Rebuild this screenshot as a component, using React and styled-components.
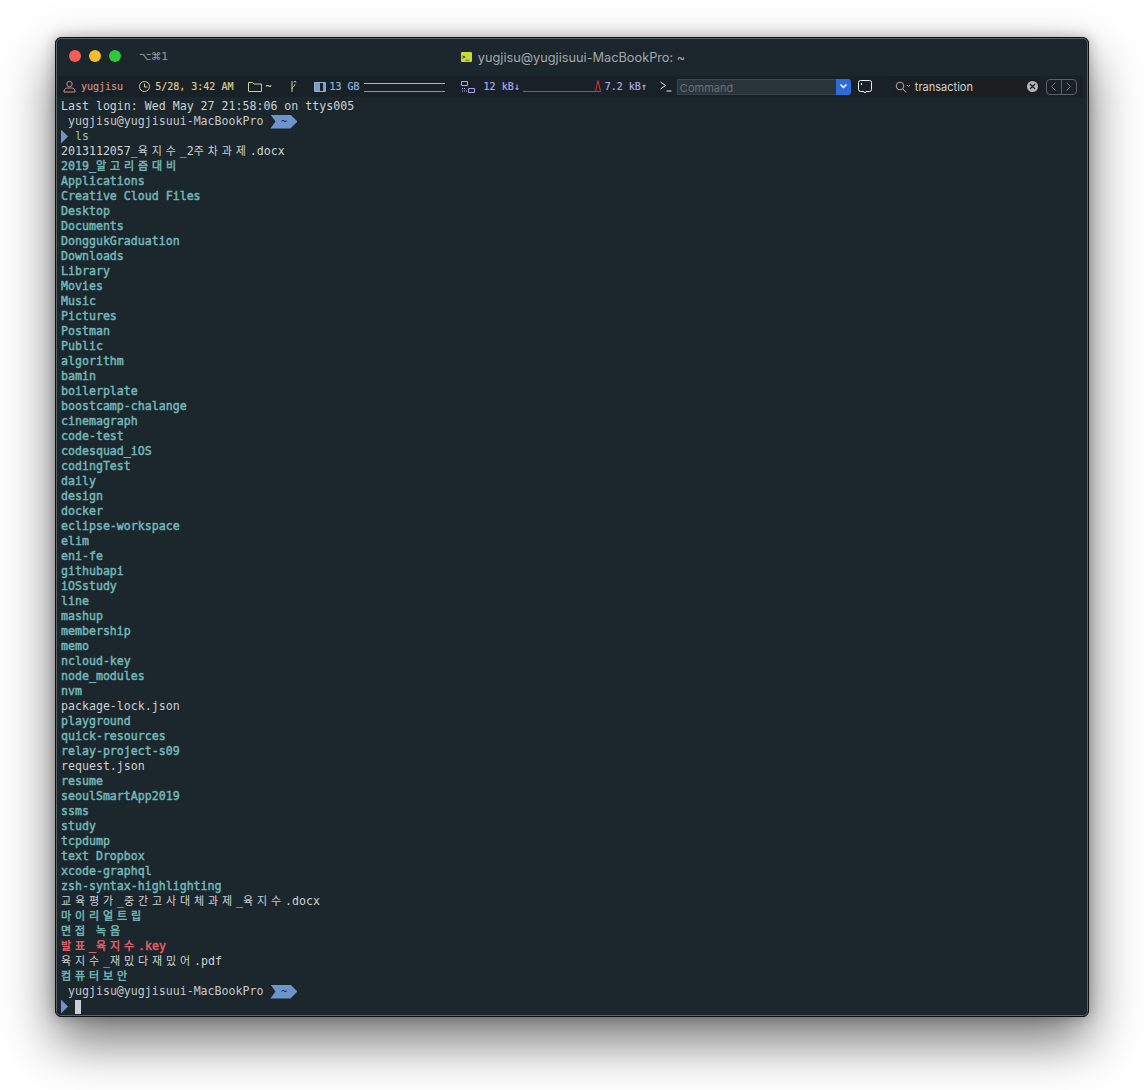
import React from 'react';
import styled, { createGlobalStyle } from 'styled-components';

const GlobalStyle = createGlobalStyle`
  html, body {
    margin: 0;
    padding: 0;
    background: #ffffff;
  }
`;

const MONO = '"DejaVu Sans Mono", "Noto Sans CJK KR", monospace';

const Page = styled.div`
  width: 1144px;
  height: 1090px;
  padding: 37px 55px 0;
  box-sizing: border-box;
  overflow: hidden;
`;

const Window = styled.div`
  width: 1034px;
  height: 980px;
  box-sizing: border-box;
  display: flex;
  flex-direction: column;
  background: #1b262d;
  border-radius: 6px;
  border: 1px solid #0c0f11;
  box-shadow: inset 0 0 0 1px #5c6468, 0 24px 52px rgba(0, 0, 0, 0.55), 0 0 14px rgba(0, 0, 0, 0.28);
  overflow: hidden;
`;

const TitleBar = styled.div`
  height: 38px;
  flex: none;
  position: relative;
  display: flex;
  align-items: center;
  justify-content: center;
  font: 12.75px Inter, "Liberation Sans", sans-serif;
  color: #a4a8aa;
`;

const Lights = styled.div`
  position: absolute;
  left: 13px;
  top: 12px;
  display: flex;
  align-items: center;
  gap: 8px;
`;

const Light = styled.span`
  width: 12px;
  height: 12px;
  border-radius: 50%;
  background: ${(p) => p.$color};
`;

const TabKey = styled.span`
  margin-left: 10px;
  font: 10.5px "DejaVu Sans", sans-serif;
  color: #8b9295;
  -webkit-text-stroke: 0.2px #8b9295;
`;

const WindowTitle = styled.div`
  display: flex;
  align-items: center;
  gap: 6px;
  margin-left: 2px;
`;

const TerminalBadge = styled.span`
  width: 11px;
  height: 10px;
  border-radius: 1px;
  background: #c5d93a;
  color: #1b262d;
  font: bold 6px/10px ${MONO};
  padding-left: 1px;
  box-sizing: border-box;
`;

const StatusBar = styled.div`
  height: 21px;
  flex: none;
  display: flex;
  align-items: center;
  margin: 0 5px 0 1px;
  background: #172127;
  font: 10px ${MONO};
  -webkit-text-stroke: 0.2px;
`;

const Item = styled.div`
  display: flex;
  align-items: center;
  gap: ${(p) => p.$gap ?? 3}px;
  margin-left: ${(p) => p.$left}px;
  color: ${(p) => p.$color};
  white-space: pre;
`;

const CommandBox = styled.div`
  margin-left: 5px;
  width: 174px;
  height: 16px;
  display: flex;
  background: #2a343b;
  border-radius: 1px 3px 3px 1px;
  font: 11px Inter, "Liberation Sans", sans-serif;
  color: #6a7277;
  -webkit-text-stroke: 0;
`;

const CommandText = styled.span`
  flex: 1;
  padding: 2px 0 0 2px;
  border: 1px solid #3a444a;
  border-right: 0;
  line-height: 13px;
`;

const CommandArrow = styled.span`
  width: 15px;
  background: #2f6bd8;
  border-radius: 0 3px 3px 0;
  display: flex;
  align-items: center;
  justify-content: center;
`;

const SearchBox = styled.div`
  margin-left: 19px;
  width: 149px;
  height: 16px;
  display: flex;
  align-items: center;
  background: #1c1f21;
  font: 11px Inter, "Liberation Sans", sans-serif;
  color: #cfd2d3;
  -webkit-text-stroke: 0;
  box-sizing: border-box;
  padding: 0 2px 0 4px;
`;

const SearchText = styled.span`
  flex: 1;
  margin-left: 4px;
`;

const ClearButton = styled.span`
  width: 11px;
  height: 11px;
  border-radius: 50%;
  background: #b4b7b8;
  display: flex;
  align-items: center;
  justify-content: center;
`;

const NavButtons = styled.div`
  margin-left: 6px;
  width: 31px;
  height: 16px;
  box-sizing: border-box;
  display: flex;
  border: 1px solid #596369;
  border-radius: 4px;
`;

const NavButton = styled.span`
  flex: 1;
  display: flex;
  align-items: center;
  justify-content: center;
  & + & {
    border-left: 1px solid #596369;
  }
`;

const Terminal = styled.div`
  flex: 1;
  padding: 2px 0 0 5px;
  font: 11.6px/15px ${MONO};
  color: #cdd2d3;
  white-space: pre;
`;

// the reference's bold is lighter than DejaVu Bold, so thicken the regular face instead
const Row = styled.div`
  height: 15px;
  display: flex;
  align-items: center;
  color: ${(p) => (p.$kind === 'dir' ? '#72b8b9' : p.$kind === 'exec' ? '#e65f68' : '#cdd2d3')};
  -webkit-text-stroke: ${(p) => (p.$kind === 'dir' || p.$kind === 'exec' ? '0.45px' : '0')};
`;

const Wide = styled.span`
  display: inline-block;
  width: 14px;
  font-size: 11px;
`;

const PromptUser = styled.span`
  margin-left: 7px;
  color: #c3c8ca;
`;

const PromptTag = styled.span`
  margin-left: 7px;
  width: 27px;
  height: 14px;
  background: #6c96cb;
  clip-path: polygon(0 0, 20px 0, 100% 50%, 20px 100%, 0 100%, 5px 50%);
  color: #1b262d;
  font-size: 10px;
  line-height: 13px;
  text-align: center;
`;

const PromptArrow = styled.span`
  width: 7px;
  height: 14px;
  background: #6c96cb;
  clip-path: polygon(0 0, 100% 50%, 0 100%);
`;

const Command = styled.span`
  margin-left: 7px;
  color: #93c79a;
`;

const Cursor = styled.span`
  margin-left: 7px;
  width: 6px;
  height: 14px;
  background: #c9d0d3;
`;

const entries = [
  ['2013112057_육지수_2주차과제.docx', 'file'],
  ['2019_알고리즘대비', 'dir'],
  ['Applications', 'dir'],
  ['Creative Cloud Files', 'dir'],
  ['Desktop', 'dir'],
  ['Documents', 'dir'],
  ['DonggukGraduation', 'dir'],
  ['Downloads', 'dir'],
  ['Library', 'dir'],
  ['Movies', 'dir'],
  ['Music', 'dir'],
  ['Pictures', 'dir'],
  ['Postman', 'dir'],
  ['Public', 'dir'],
  ['algorithm', 'dir'],
  ['bamin', 'dir'],
  ['boilerplate', 'dir'],
  ['boostcamp-chalange', 'dir'],
  ['cinemagraph', 'dir'],
  ['code-test', 'dir'],
  ['codesquad_iOS', 'dir'],
  ['codingTest', 'dir'],
  ['daily', 'dir'],
  ['design', 'dir'],
  ['docker', 'dir'],
  ['eclipse-workspace', 'dir'],
  ['elim', 'dir'],
  ['eni-fe', 'dir'],
  ['githubapi', 'dir'],
  ['iOSstudy', 'dir'],
  ['line', 'dir'],
  ['mashup', 'dir'],
  ['membership', 'dir'],
  ['memo', 'dir'],
  ['ncloud-key', 'dir'],
  ['node_modules', 'dir'],
  ['nvm', 'dir'],
  ['package-lock.json', 'file'],
  ['playground', 'dir'],
  ['quick-resources', 'dir'],
  ['relay-project-s09', 'dir'],
  ['request.json', 'file'],
  ['resume', 'dir'],
  ['seoulSmartApp2019', 'dir'],
  ['ssms', 'dir'],
  ['study', 'dir'],
  ['tcpdump', 'dir'],
  ['text Dropbox', 'dir'],
  ['xcode-graphql', 'dir'],
  ['zsh-syntax-highlighting', 'dir'],
  ['교육평가_중간고사대체과제_육지수.docx', 'file'],
  ['마이리얼트립', 'dir'],
  ['면접 녹음', 'dir'],
  ['발표_육지수.key', 'exec'],
  ['육지수_재밌다재밌어.pdf', 'file'],
  ['컴퓨터보안', 'dir'],
];

// hangul takes two terminal cells, so each syllable gets its own fixed-width box
const CellText = ({ text }) => (
  <span>
    {text.split(/([\uAC00-\uD7A3])/).map((part, i) =>
      /[\uAC00-\uD7A3]/.test(part) ? <Wide key={i}>{part}</Wide> : part
    )}
  </span>
);

const Prompt = () => (
  <Row>
    <PromptUser>yugjisu@yugjisuui-MacBookPro</PromptUser>
    <PromptTag>~</PromptTag>
  </Row>
);

const Icon = ({ w = 13, h = 13, children, color = 'currentColor' }) => (
  <svg width={w} height={h} viewBox={`0 0 ${w} ${h}`} fill="none" stroke={color} strokeWidth="1">
    {children}
  </svg>
);

const Spark = ({ width, flat, spike }) => (
  <svg width={width} height="14" viewBox={`0 0 ${width} 14`} fill="none">
    {flat.map((y, i) => (
      <line key={i} x1="0" x2={width} y1={y.y} y2={y.y} stroke={y.color} strokeWidth="1" />
    ))}
    {spike && <path d={spike} stroke="#d8372f" strokeWidth="1" />}
  </svg>
);

export default function App() {
  return (
    <Page>
      <GlobalStyle />
      <Window>
        <TitleBar>
          <Lights>
            <Light $color="#f05f57" />
            <Light $color="#f8bb2e" />
            <Light $color="#2fc740" />
            <TabKey>⌥⌘1</TabKey>
          </Lights>
          <WindowTitle>
            <TerminalBadge>&gt;_</TerminalBadge>
            yugjisu@yugjisuui-MacBookPro: ~
          </WindowTitle>
        </TitleBar>
        <StatusBar>
          <Item $left={6} $color="#d08f88" $gap={5}>
            <Icon>
              <circle cx="6.5" cy="4" r="2.7" />
              <path d="M1 12v-1c0-2 2-3 3.500-3h4c1.500 0 3.500 1 3.500 3v1z" />
            </Icon>
            yugjisu
          </Item>
          <Item $left={15} $color="#dcc98e" $gap={4}>
            <Icon>
              <circle cx="6.500" cy="6.500" r="5" />
              <path d="M6.500 3.500v3.500h3" />
            </Icon>
            5/28, 3:42 AM
          </Item>
          <Item $left={15} $color="#c3d48f" $gap={3}>
            <Icon w={14} h={12}>
              <path d="M.5 10.500v-9h4l1.500 1.500h7.500v7.500z" />
            </Icon>
            ~
          </Item>
          <Item $left={18} $color="#c3d48f">
            <Icon w={9} h={13}>
              <path d="M3 1v11M3 9c0-3 3-2 3-5M5 2.500l1-1.500 1 1.500" />
            </Icon>
          </Item>
          <Item $left={16} $color="#93b1dc" $gap={2}>
            <Icon h={10}>
              <path d="M.5 .5h11v9H.5z" />
              <path d="M1 1h5v8H1zM9 1h2.500v8H9z" fill="#7f9cc9" stroke="none" />
            </Icon>
            13 GB
          </Item>
          <Item $left={4}>
            <Spark width={81} flat={[{ y: 3.500, color: '#9db6da' }, { y: 11.500, color: '#7f97b8' }]} />
          </Item>
          <Item $left={16} $color="#aea8ea">
            <Icon w={14} h={14}>
              <path d="M.5 1.500h6v4h-6zM7.500 8.500h6v4h-6z" />
              <path d="M1 8.500h1M3 8.500h1M1 11h1M3 11h1M5 11h1" />
            </Icon>
          </Item>
          <Item $left={9} $color="#aea8ea">12 kB↓</Item>
          <Item $left={3}>
            <Spark width={78} flat={[{ y: 11.500, color: '#d8372f' }]} spike="M72.500 11.500l2.500-11 2.500 11" />
          </Item>
          <Item $left={4} $color="#aea8ea">7.2 kB↑</Item>
          <Item $left={13} $color="#e6e8e9">
            <Icon w={12} h={11}>
              <path d="M.5 1l5 3.500-5 3.500M6.500 10h5" />
            </Icon>
          </Item>
          <CommandBox>
            <CommandText>Command</CommandText>
            <CommandArrow>
              <Icon w={7} h={5} color="#ffffff">
                <path d="M.5 .5l3 3 3-3" strokeWidth="1.500" />
              </Icon>
            </CommandArrow>
          </CommandBox>
          <Item $left={7} $color="#eef0f0">
            <Icon w={14} h={14}>
              <path d="M2.500 .5h9a2 2 0 0 1 2 2v7a2 2 0 0 1-2 2H8l-1 1.500-1-1.500H2.500a2 2 0 0 1-2-2v-7a2 2 0 0 1 2-2z" />
              <path d="M3.500 3v2" />
            </Icon>
          </Item>
          <SearchBox>
            <Icon w={16} h={12} color="#a9adaf">
              <circle cx="5" cy="5" r="3.800" />
              <path d="M8 8l3 3.500M12 4l1.500 1.500L15 4" />
            </Icon>
            <SearchText>transaction</SearchText>
            <ClearButton>
              <Icon w={7} h={7} color="#1c1f21">
                <path d="M1 1l5 5M6 1l-5 5" strokeWidth="1.300" />
              </Icon>
            </ClearButton>
          </SearchBox>
          <NavButtons>
            <NavButton>
              <Icon w={5} h={9} color="#6b747a">
                <path d="M4.500 .5l-4 4 4 4" />
              </Icon>
            </NavButton>
            <NavButton>
              <Icon w={5} h={9} color="#6b747a">
                <path d="M.5 .5l4 4-4 4" />
              </Icon>
            </NavButton>
          </NavButtons>
        </StatusBar>
        <Terminal>
          <Row $kind="file">Last login: Wed May 27 21:58:06 on ttys005</Row>
          <Prompt />
          <Row>
            <PromptArrow />
            <Command>ls</Command>
          </Row>
          {entries.map(([name, kind]) => (
            <Row key={name} $kind={kind}>
              <CellText text={name} />
            </Row>
          ))}
          <Prompt />
          <Row>
            <PromptArrow />
            <Cursor />
          </Row>
        </Terminal>
      </Window>
    </Page>
  );
}
